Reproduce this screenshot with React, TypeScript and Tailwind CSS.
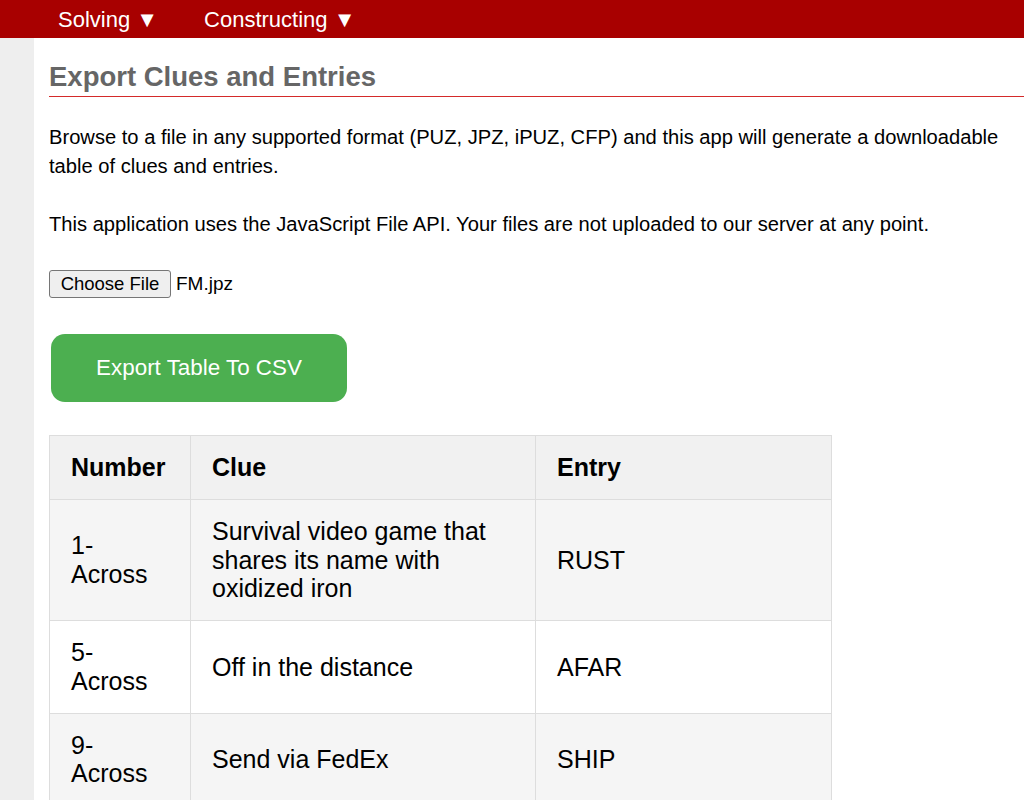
const rows = [
  { num: '1-Across', clue: 'Survival video game that shares its name with oxidized iron', entry: 'RUST' },
  { num: '5-Across', clue: 'Off in the distance', entry: 'AFAR' },
  { num: '9-Across', clue: 'Send via FedEx', entry: 'SHIP' },
];

export default function App() {
  return (
    <div className="min-h-[800px] bg-[#eeeeee] font-['Liberation_Sans',Arial,sans-serif] text-black">
      {/* top nav */}
      <nav className="flex h-[38px] items-center bg-[#a80000] pl-[35px] text-[22px] text-white">
        <span className="px-[23px]">Solving ▼</span>
        <span className="px-[23px]">Constructing ▼</span>
      </nav>

      <div className="ml-[34px] bg-white pb-10 pl-[15px]">
        <h1 className="border-b border-solid border-b-[#d42a2a] pt-[23px] pb-[3px] text-[27.5px] font-bold leading-[1.15] text-[#666666]">
          Export Clues and Entries
        </h1>

        <p className="mt-[26px] pr-[20px] text-[20.15px] leading-[29px]">
          Browse to a file in any supported format (PUZ, JPZ, iPUZ, CFP) and this app will generate a downloadable
          table of clues and entries.
        </p>
        <p className="mt-[29px] text-[20.15px] leading-[29px]">
          This application uses the JavaScript File API. Your files are not uploaded to our server at any point.
        </p>

        <div className="mt-[31px] flex items-center gap-[5px]">
          <button className="h-[28px] w-[122px] rounded-[3px] border border-[#767676] bg-[#efefef] text-[18.5px] leading-none">
            Choose File
          </button>
          <span className="text-[19px]">FM.jpz</span>
        </div>

        <button className="mt-[36px] ml-[2px] h-[68px] w-[296px] rounded-[14px] bg-[#4caf50] text-[22.4px] text-white">
          Export Table To CSV
        </button>

        <table className="mt-[33px] w-[782px] table-fixed border-collapse text-[25px] leading-[1.15]">
          <colgroup>
            <col className="w-[141px]" />
            <col className="w-[345px]" />
            <col className="w-[296px]" />
          </colgroup>
          <thead>
            <tr className="bg-[#f1f1f1]">
              <th className="border border-[#dddddd] px-[21px] py-[17px] text-left font-bold">Number</th>
              <th className="border border-[#dddddd] px-[21px] py-[17px] text-left font-bold">Clue</th>
              <th className="border border-[#dddddd] px-[21px] py-[17px] text-left font-bold">Entry</th>
            </tr>
          </thead>
          <tbody>
            {rows.map((r, i) => (
              <tr key={r.num} className={i % 2 === 0 ? 'bg-[#f5f5f5]' : 'bg-white'}>
                <td className="border border-[#dddddd] px-[21px] py-[17px]">
                  <span className="block w-[80px]">{r.num}</span>
                </td>
                <td className="border border-[#dddddd] px-[21px] py-[17px]">{r.clue}</td>
                <td className="border border-[#dddddd] px-[21px] py-[17px]">{r.entry}</td>
              </tr>
            ))}
          </tbody>
        </table>
      </div>
    </div>
  );
}
